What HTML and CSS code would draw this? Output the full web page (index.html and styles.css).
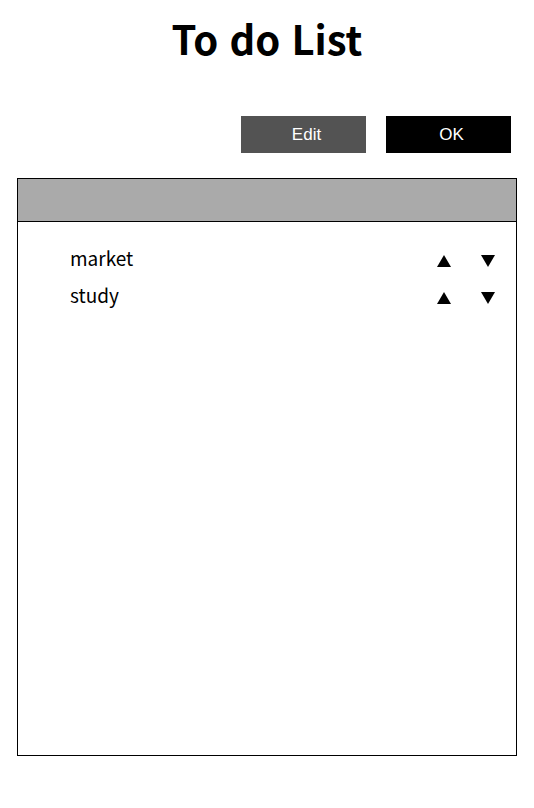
FILE: index.html
```html
<!DOCTYPE html>
<html lang="ko">
<head>
<meta charset="utf-8">
<title>To do List</title>
<link rel="stylesheet" href="styles.css">
</head>
<body>
<h1 class="title">To do List</h1>
<div class="actions">
  <button class="btn btn-edit">Edit</button>
  <button class="btn btn-ok">OK</button>
</div>
<div class="panel">
  <div class="panel-head"></div>
  <ul class="list">
    <li class="item">
      <span class="item-text">market</span>
      <span class="arrows">
        <svg class="arrow" width="14" height="12" viewBox="0 0 14 12"><polygon points="7,0 14,12 0,12"/></svg>
        <svg class="arrow" width="14" height="12" viewBox="0 0 14 12"><polygon points="0,0 14,0 7,12"/></svg>
      </span>
    </li>
    <li class="item">
      <span class="item-text">study</span>
      <span class="arrows">
        <svg class="arrow" width="14" height="12" viewBox="0 0 14 12"><polygon points="7,0 14,12 0,12"/></svg>
        <svg class="arrow" width="14" height="12" viewBox="0 0 14 12"><polygon points="0,0 14,0 7,12"/></svg>
      </span>
    </li>
  </ul>
</div>
</body>
</html>
```
FILE: styles.css
```css
html, body {
  margin: 0;
  padding: 0;
  background: #fff;
}
body {
  font-family: "Noto Sans CJK KR", "Noto Sans", sans-serif;
  color: #000;
}
.title {
  margin: 0;
  padding-top: 8px;
  height: 62px;
  line-height: 60px;
  text-align: center;
  font-size: 40px;
  font-weight: 700;
}
.actions {
  display: flex;
  justify-content: flex-end;
  gap: 20px;
  padding-right: 23px;
  margin-top: 46px;
}
.btn {
  width: 125px;
  height: 37px;
  border: none;
  margin: 0;
  padding: 0 0 0 6px;
  font-family: "Liberation Sans", Arial, sans-serif;
  font-size: 17px;
  color: #fff;
  cursor: pointer;
}
.btn-edit {
  background: #535353;
}
.btn-ok {
  background: #000;
}
.panel {
  box-sizing: border-box;
  width: 500px;
  height: 578px;
  margin: 25px 0 0 17px;
  border: 1px solid #000;
}
.panel-head {
  height: 42px;
  background: #aaa;
  border-bottom: 1px solid #000;
}
.list {
  list-style: none;
  margin: 0;
  padding: 20px 21px 0 52px;
}
.item {
  display: flex;
  align-items: center;
  justify-content: space-between;
  height: 37px;
  font-size: 19px;
}
.item-text {
  padding-bottom: 7px;
}
.arrows {
  display: flex;
  gap: 30px;
}
.arrow {
  display: block;
  fill: #000;
}
```
